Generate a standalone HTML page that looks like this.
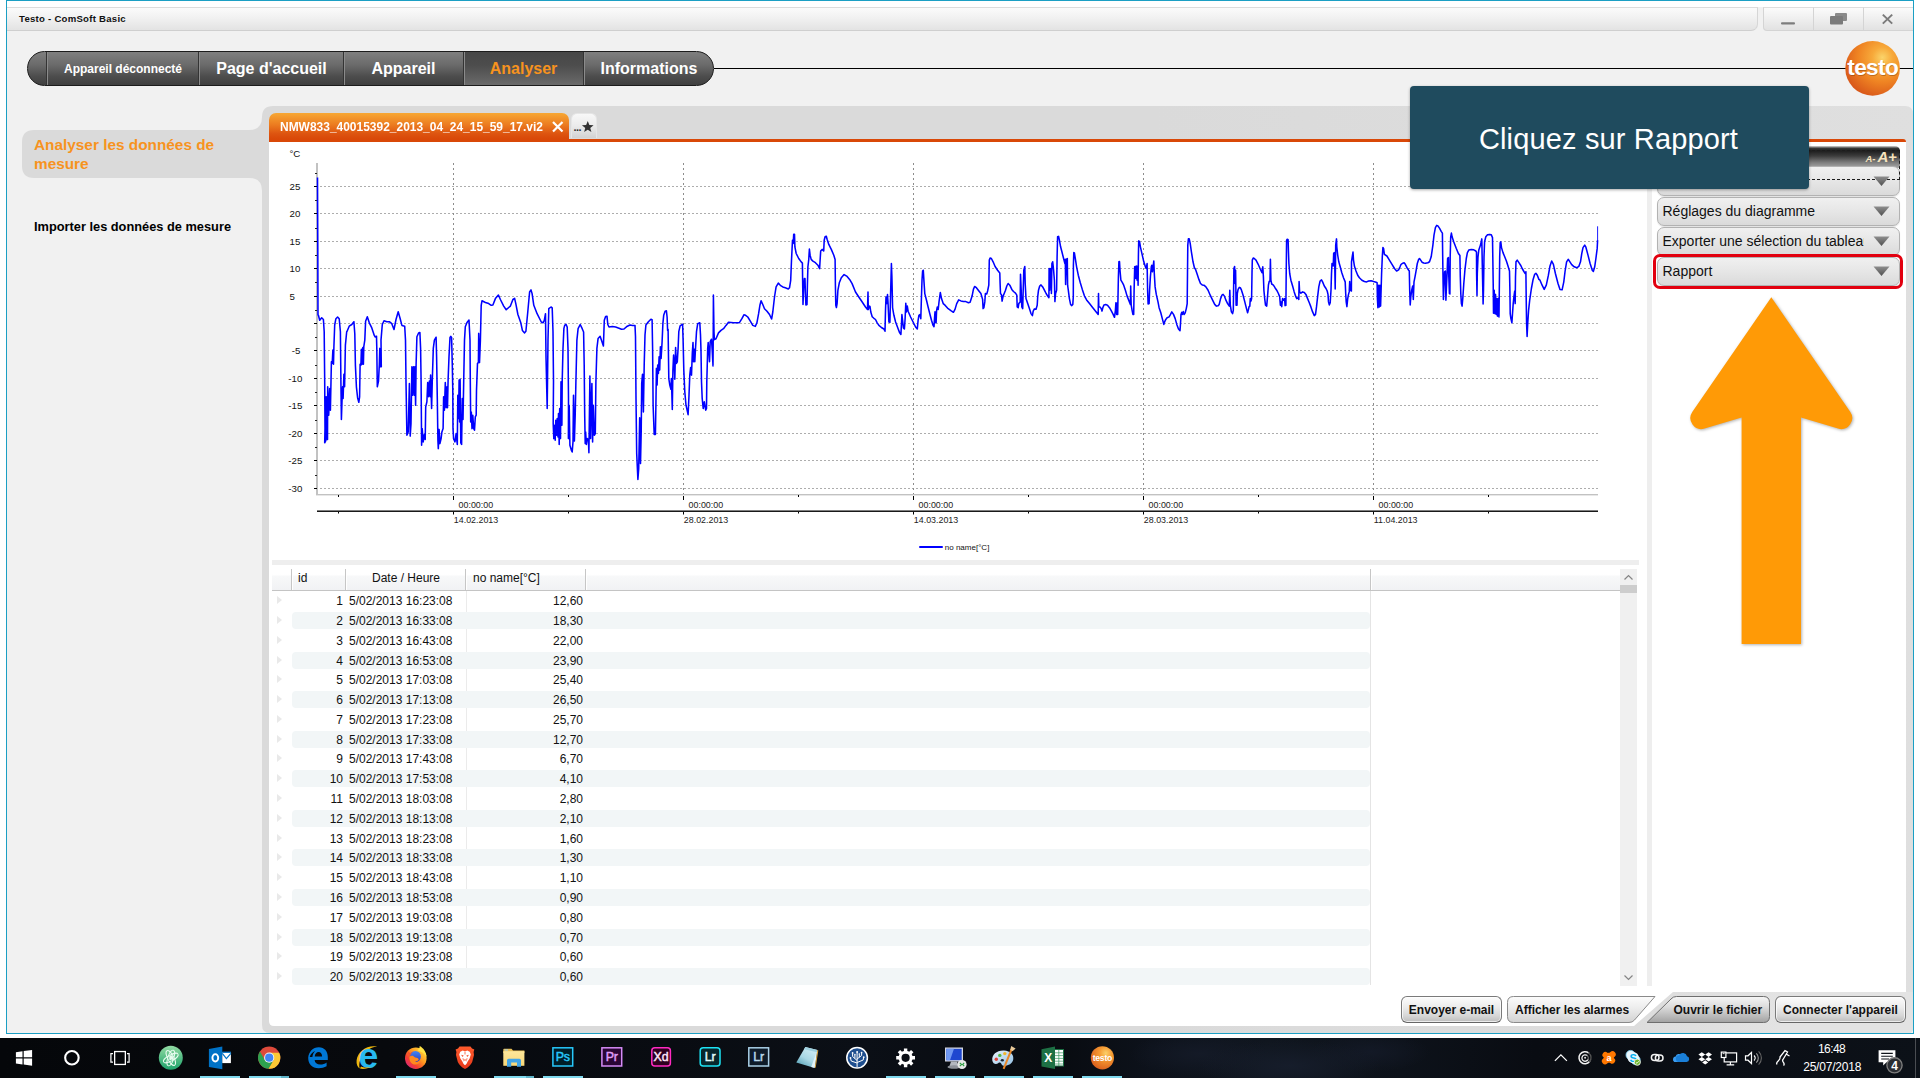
<!DOCTYPE html>
<html lang="fr"><head><meta charset="utf-8"><title>Testo - ComSoft Basic</title>
<style>
*{box-sizing:border-box;margin:0;padding:0}
html,body{width:1920px;height:1078px;overflow:hidden;background:#fff}
body{font-family:"Liberation Sans",sans-serif;position:relative;color:#000}
.a{position:absolute}
.nw{white-space:nowrap}
/* window */
#win{left:6px;top:0;width:1908px;height:1034px;border:1px solid #1b9fc4;background:#f1f1f1}
#wtop{left:7px;top:1px;width:1906px;height:6px;background:#fff}
#tbar{left:7px;top:7px;width:1751px;height:24px;background:linear-gradient(#fbfbfb,#f1f1f1 45%,#e3e3e3);border-bottom:1px solid #cfcfcf;border-right:1px solid #d6d6d6;border-top:1px solid #dcdcdc;border-bottom-right-radius:7px}
#ttl{left:19px;top:12px;font-size:9.6px;font-weight:bold;line-height:13px;letter-spacing:.25px;color:#111}
.wb{top:7px;height:24px;background:linear-gradient(#fbfbfb,#f0f0f0 45%,#e2e2e2);border:1px solid #d4d4d4;border-top-color:#dedede}
/* nav */
#nav{left:27px;top:51px;width:687px;height:35px;border-radius:18px;border:1px solid #1c1c1c;background:linear-gradient(#7f7f7f,#6a6a6a 40%,#4c4c4c 75%,#404040);overflow:hidden}
#nav .sec{position:absolute;top:0;height:33px;border-left:1px solid #343434;box-shadow:inset 1px 0 0 #8b8b8b;color:#fff;font-weight:bold;text-align:center;line-height:34.2px;white-space:nowrap}
#hline{left:714px;top:67.9px;width:1199px;height:1.3px;background:#000}
</style></head><body>

<div class="a" id="win"></div>
<div class="a" id="wtop"></div>
<div class="a" id="tbar"></div>
<div class="a nw" id="ttl">Testo - ComSoft Basic</div>
<div class="a wb" style="left:1763px;width:51px;border-bottom-left-radius:4px"></div>
<div class="a wb" style="left:1813px;width:51px"></div>
<div class="a wb" style="left:1863px;width:50px;border-right:none"></div>
<svg class="a" style="left:1763px;top:7px" width="150" height="24" viewBox="0 0 150 24">
 <rect x="18" y="15.2" width="14" height="2.2" rx="1" fill="#7d7d7d"/>
 <rect x="72" y="6" width="12" height="8" rx="1" fill="#8a8a8a"/>
 <rect x="67" y="9" width="13" height="8.5" rx="1" fill="#7b7b7b"/>
 <path d="M119.8 7.6 L129.2 16.6 M129.2 7.6 L119.8 16.6" stroke="#7b7b7b" stroke-width="2" fill="none"/>
</svg>

<div class="a" id="hline"></div>
<div class="a" id="nav">
 <div class="sec" style="left:18px;width:153px;font-size:12px;letter-spacing:0">Appareil déconnecté</div>
 <div class="sec" style="left:170px;width:146px;font-size:16px">Page d'accueil</div>
 <div class="sec" style="left:315px;width:120px;font-size:16px">Appareil</div>
 <div class="sec" style="left:435px;width:120px;font-size:16px;color:#f7931e;background:linear-gradient(#474747,#4d4d4d 40%,#606060 80%,#6b6b6b)">Analyser</div>
 <div class="sec" style="left:555px;width:131px;font-size:16px">Informations</div>
</div>
<!-- testo logo -->
<svg class="a" style="left:1840px;top:36px" width="66" height="66" viewBox="0 0 66 66">
 <defs><radialGradient id="tg" cx="0.68" cy="0.3" r="0.75">
  <stop offset="0" stop-color="#fbd46a"/><stop offset="0.25" stop-color="#f7a93a"/><stop offset="0.6" stop-color="#ef8423"/><stop offset="1" stop-color="#d9591a"/></radialGradient></defs>
 <circle cx="32.6" cy="32.4" r="27.3" fill="url(#tg)"/>
 <text x="33.2" y="39.8" text-anchor="middle" font-family="Liberation Sans, sans-serif" font-weight="bold" font-size="22.6" fill="#7a3a10" opacity=".45" letter-spacing="-.6">testo</text>
 <text x="32.7" y="38.9" text-anchor="middle" font-family="Liberation Sans, sans-serif" font-weight="bold" font-size="22.6" fill="#fff" letter-spacing="-.6">testo</text>
</svg>

<!-- gray frame + selected sidebar item -->
<svg class="a" style="left:0;top:100px" width="1920" height="935" viewBox="0 100 1920 935">
 <defs><linearGradient id="frg" gradientUnits="userSpaceOnUse" x1="0" y1="0" x2="1920" y2="0"><stop offset=".6" stop-color="#dadada"/><stop offset="1" stop-color="#dfdfdf"/></linearGradient><linearGradient id="frg2" gradientUnits="userSpaceOnUse" x1="1626" y1="0" x2="1780" y2="0"><stop offset="0" stop-color="#dcdcdc"/><stop offset="1" stop-color="#e3e3e3"/></linearGradient></defs>
 <path fill="url(#frg)" d="M262 117 Q262 106 273 106 H1905 Q1913 106 1913 114 V1028 Q1913 1033 1908 1033 H270 Q262 1033 262 1025 V191 Q262 178 249 178 H34 Q22 178 22 166 V142 Q22 130 34 130 H249 Q262 130 262 117 Z"/>
 <path fill="url(#frg2)" d="M1673 992 H1913 V1028 Q1913 1033 1908 1033 H1626 Z"/>
 <path fill="#fff" d="M269 141 H1906 V992 H1673 L1634 1026 H274 Q269 1026 269 1021 Z"/>
</svg>
<div class="a" style="left:34px;top:134.5px;width:220px;font-size:15.37px;line-height:19.5px;font-weight:bold;color:#f7931e">Analyser les données de mesure</div>
<div class="a nw" style="left:34px;top:218px;font-size:12.8px;line-height:18px;font-weight:bold;color:#000">Importer les données de mesure</div>
<!-- tabs -->
<div class="a" style="left:269px;top:139px;width:1637px;height:3px;background:#d94808;border-top-right-radius:4px"></div>
<div class="a" style="left:269px;top:113px;width:300px;height:26px;border-radius:7px 7px 0 0;background:linear-gradient(#f7a733,#ec7c20 45%,#dd5410 80%,#d94808)"></div>
<div class="a nw" style="left:280px;top:118.5px;font-size:13px;line-height:16px;font-weight:bold;color:#fff;transform-origin:0 50%;transform:scaleX(.921)" id="tabtxt">NMW833_40015392_2013_04_24_15_59_17.vi2</div>
<svg class="a" style="left:550px;top:119px" width="16" height="16" viewBox="0 0 16 16"><path d="M3 3 L12.5 12.5 M12.5 3 L3 12.5" stroke="#fff" stroke-width="2.2" fill="none"/></svg>
<div class="a" style="left:571px;top:113px;width:26px;height:25px;border-radius:6px 6px 0 0;background:linear-gradient(#f8f8f8,#ebebeb 50%,#d2d2d2);border:1px solid #e6e6e6;border-bottom:none"></div>
<div class="a nw" style="left:573.5px;top:119px;font-size:11px;line-height:16px;font-weight:bold;color:#333;letter-spacing:-.6px">...</div>
<svg class="a" style="left:581px;top:119.5px" width="13.5" height="13.5" viewBox="0 0 16 16"><path fill="#333" d="M8 1.2 L9.9 5.9 L14.9 6.2 L11 9.4 L12.3 14.3 L8 11.6 L3.7 14.3 L5 9.4 L1.1 6.2 L6.1 5.9 Z"/></svg>
<!-- splitters -->
<div class="a" style="left:1647px;top:142px;width:5px;height:844px;background:#eee"></div>
<div class="a" style="left:272px;top:560px;width:1367px;height:5px;background:#eee"></div>
<svg class="a" style="left:269px;top:142px" width="1378" height="418" viewBox="269 142 1378 418" font-family="Liberation Sans, sans-serif">
<line x1="320" x2="1598" y1="186.5" y2="186.5" stroke="#adadad" stroke-width="1" stroke-dasharray="2 2"/>
<line x1="320" x2="1598" y1="213.5" y2="213.5" stroke="#adadad" stroke-width="1" stroke-dasharray="2 2"/>
<line x1="320" x2="1598" y1="241.5" y2="241.5" stroke="#adadad" stroke-width="1" stroke-dasharray="2 2"/>
<line x1="320" x2="1598" y1="268.5" y2="268.5" stroke="#adadad" stroke-width="1" stroke-dasharray="2 2"/>
<line x1="320" x2="1598" y1="296.5" y2="296.5" stroke="#adadad" stroke-width="1" stroke-dasharray="2 2"/>
<line x1="320" x2="1598" y1="323.5" y2="323.5" stroke="#b4b4b4" stroke-width="1" stroke-dasharray="2 2"/>
<line x1="320" x2="1598" y1="350.5" y2="350.5" stroke="#adadad" stroke-width="1" stroke-dasharray="2 2"/>
<line x1="320" x2="1598" y1="378.5" y2="378.5" stroke="#adadad" stroke-width="1" stroke-dasharray="2 2"/>
<line x1="320" x2="1598" y1="405.5" y2="405.5" stroke="#adadad" stroke-width="1" stroke-dasharray="2 2"/>
<line x1="320" x2="1598" y1="433.5" y2="433.5" stroke="#adadad" stroke-width="1" stroke-dasharray="2 2"/>
<line x1="320" x2="1598" y1="460.5" y2="460.5" stroke="#adadad" stroke-width="1" stroke-dasharray="2 2"/>
<line x1="320" x2="1598" y1="488.5" y2="488.5" stroke="#adadad" stroke-width="1" stroke-dasharray="2 2"/>
<line x1="453.5" x2="453.5" y1="163" y2="494" stroke="#8c8c8c" stroke-width="1" stroke-dasharray="2 3"/>
<line x1="683.5" x2="683.5" y1="163" y2="494" stroke="#8c8c8c" stroke-width="1" stroke-dasharray="2 3"/>
<line x1="913.5" x2="913.5" y1="163" y2="494" stroke="#8c8c8c" stroke-width="1" stroke-dasharray="2 3"/>
<line x1="1143.5" x2="1143.5" y1="163" y2="494" stroke="#8c8c8c" stroke-width="1" stroke-dasharray="2 3"/>
<line x1="1373.5" x2="1373.5" y1="163" y2="494" stroke="#8c8c8c" stroke-width="1" stroke-dasharray="2 3"/>
<rect x="316" y="163" width="2" height="332" fill="#c2c2c2"/>
<rect x="316" y="494" width="1282" height="1.4" fill="#c2c2c2"/>
<rect x="317" y="510.5" width="1281" height="1.4" fill="#000"/>
<rect x="314" y="186" width="3" height="1" fill="#000"/>
<rect x="314" y="213" width="3" height="1" fill="#000"/>
<rect x="314" y="241" width="3" height="1" fill="#000"/>
<rect x="314" y="268" width="3" height="1" fill="#000"/>
<rect x="314" y="296" width="3" height="1" fill="#000"/>
<rect x="314" y="323" width="3" height="1" fill="#000"/>
<rect x="314" y="350" width="3" height="1" fill="#000"/>
<rect x="314" y="378" width="3" height="1" fill="#000"/>
<rect x="314" y="405" width="3" height="1" fill="#000"/>
<rect x="314" y="433" width="3" height="1" fill="#000"/>
<rect x="314" y="460" width="3" height="1" fill="#000"/>
<rect x="314" y="488" width="3" height="1" fill="#000"/>
<rect x="315" y="173.0" width="2" height="1" fill="#222"/>
<rect x="315" y="200.0" width="2" height="1" fill="#222"/>
<rect x="315" y="228.0" width="2" height="1" fill="#222"/>
<rect x="315" y="255.0" width="2" height="1" fill="#222"/>
<rect x="315" y="282.0" width="2" height="1" fill="#222"/>
<rect x="315" y="310.0" width="2" height="1" fill="#222"/>
<rect x="315" y="337.0" width="2" height="1" fill="#222"/>
<rect x="315" y="365.0" width="2" height="1" fill="#222"/>
<rect x="315" y="392.0" width="2" height="1" fill="#222"/>
<rect x="315" y="420.0" width="2" height="1" fill="#222"/>
<rect x="315" y="447.0" width="2" height="1" fill="#222"/>
<rect x="315" y="475.0" width="2" height="1" fill="#222"/>
<rect x="453" y="496" width="1" height="4" fill="#000"/>
<rect x="453" y="512" width="1" height="2.5" fill="#000"/>
<rect x="683" y="496" width="1" height="4" fill="#000"/>
<rect x="683" y="512" width="1" height="2.5" fill="#000"/>
<rect x="913" y="496" width="1" height="4" fill="#000"/>
<rect x="913" y="512" width="1" height="2.5" fill="#000"/>
<rect x="1143" y="496" width="1" height="4" fill="#000"/>
<rect x="1143" y="512" width="1" height="2.5" fill="#000"/>
<rect x="1373" y="496" width="1" height="4" fill="#000"/>
<rect x="1373" y="512" width="1" height="2.5" fill="#000"/>
<rect x="338" y="495" width="1" height="2" fill="#000"/>
<rect x="338" y="512" width="1" height="1.5" fill="#000"/>
<rect x="568" y="495" width="1" height="2" fill="#000"/>
<rect x="568" y="512" width="1" height="1.5" fill="#000"/>
<rect x="798" y="495" width="1" height="2" fill="#000"/>
<rect x="798" y="512" width="1" height="1.5" fill="#000"/>
<rect x="1028" y="495" width="1" height="2" fill="#000"/>
<rect x="1028" y="512" width="1" height="1.5" fill="#000"/>
<rect x="1258" y="495" width="1" height="2" fill="#000"/>
<rect x="1258" y="512" width="1" height="1.5" fill="#000"/>
<rect x="1488" y="495" width="1" height="2" fill="#000"/>
<rect x="1488" y="512" width="1" height="1.5" fill="#000"/>
<text x="289.5" y="157" font-size="9.7" fill="#111">°C</text>
<text x="300.3" y="190.0" font-size="9.7" fill="#111" text-anchor="end">25</text>
<text x="300.3" y="217.0" font-size="9.7" fill="#111" text-anchor="end">20</text>
<text x="300.3" y="245.0" font-size="9.7" fill="#111" text-anchor="end">15</text>
<text x="300.3" y="272.0" font-size="9.7" fill="#111" text-anchor="end">10</text>
<text x="289.5" y="300.0" font-size="9.7" fill="#111">5</text>
<text x="300.3" y="354.0" font-size="9.7" fill="#111" text-anchor="end">-5</text>
<text x="302.3" y="382.0" font-size="9.7" fill="#111" text-anchor="end">-10</text>
<text x="302.3" y="409.0" font-size="9.7" fill="#111" text-anchor="end">-15</text>
<text x="302.3" y="437.0" font-size="9.7" fill="#111" text-anchor="end">-20</text>
<text x="302.3" y="464.0" font-size="9.7" fill="#111" text-anchor="end">-25</text>
<text x="302.3" y="492.0" font-size="9.7" fill="#111" text-anchor="end">-30</text>
<text x="458.6" y="507.6" font-size="8.9" fill="#222">00:00:00</text>
<text x="453.8" y="523" font-size="8.9" fill="#222">14.02.2013</text>
<text x="688.6" y="507.6" font-size="8.9" fill="#222">00:00:00</text>
<text x="683.8" y="523" font-size="8.9" fill="#222">28.02.2013</text>
<text x="918.6" y="507.6" font-size="8.9" fill="#222">00:00:00</text>
<text x="913.8" y="523" font-size="8.9" fill="#222">14.03.2013</text>
<text x="1148.6" y="507.6" font-size="8.9" fill="#222">00:00:00</text>
<text x="1143.8" y="523" font-size="8.9" fill="#222">28.03.2013</text>
<text x="1378.6" y="507.6" font-size="8.9" fill="#222">00:00:00</text>
<text x="1373.8" y="523" font-size="8.9" fill="#222">11.04.2013</text>
<line x1="920" x2="942" y1="547" y2="547" stroke="#0000ff" stroke-width="2" stroke-linecap="round"/>
<text x="944.8" y="550" font-size="8" fill="#111">no name[°C]</text>
<polyline fill="none" stroke="#0000ff" stroke-width="1.55" stroke-linejoin="round" points="317.5,177.5 317.8,248.2 318.0,315.0 318.4,315.3 319.7,320.3 321.7,317.8 323.4,319.5 324.2,331.7 324.7,381.8 325.0,428.6 324.7,442.8 325.9,440.3 326.2,396.8 326.7,438.6 327.5,439.4 327.7,386.8 328.7,415.2 329.7,388.5 330.4,410.2 331.4,361.8 332.2,363.4 332.9,350.1 333.5,364.3 333.9,346.7 334.7,325.0 335.9,318.7 337.6,317.0 339.2,318.7 340.4,331.7 340.9,381.8 341.4,419.4 342.1,398.5 342.6,386.8 343.1,398.5 343.9,374.3 344.6,386.8 345.4,345.1 346.7,331.7 347.1,331.2 349.2,326.2 351.8,324.5 353.9,321.7 354.8,333.7 355.4,365.1 356.4,386.8 357.6,397.7 358.8,402.3 359.6,396.8 360.1,364.3 360.9,365.1 361.4,349.2 362.1,364.3 362.8,347.6 363.4,364.3 363.8,346.7 364.8,340.1 365.6,321.2 367.3,316.7 369.3,322.8 371.8,327.9 374.3,335.4 375.1,337.0 376.5,336.2 376.8,348.4 377.3,386.8 378.5,381.0 379.3,365.1 379.8,348.4 380.5,366.8 381.3,366.8 381.0,340.1 382.3,324.5 384.0,320.7 386.8,321.7 389.3,321.7 391.8,323.7 394.0,329.5 396.0,319.5 398.2,311.7 400.2,318.7 401.9,325.4 404.7,326.2 405.5,340.1 406.0,381.8 406.9,435.3 408.2,431.9 409.4,383.5 410.2,436.1 411.0,423.6 411.9,366.8 412.7,395.2 413.5,366.8 414.4,395.2 414.9,366.8 415.6,405.2 416.1,365.1 416.9,336.7 418.6,333.0 419.9,332.5 420.6,348.4 421.1,381.8 421.6,445.3 422.2,428.6 423.2,441.9 424.4,434.4 425.2,439.4 425.7,406.9 426.9,401.8 427.7,382.6 428.6,396.8 429.4,381.0 430.3,396.8 430.6,375.1 431.6,408.5 432.3,380.1 433.3,348.4 434.4,340.1 436.1,337.2 436.6,356.8 437.3,398.5 437.9,440.3 438.3,448.6 439.1,429.4 439.9,443.6 441.1,438.6 441.9,431.9 443.1,428.6 443.6,396.8 444.4,410.2 445.3,382.6 446.1,407.7 447.0,386.8 447.5,407.7 448.1,380.1 449.0,356.8 450.0,337.5 450.8,336.4 451.6,337.5 452.3,365.1 452.8,391.8 453.0,428.6 453.6,438.6 455.0,441.9 456.1,433.6 457.3,444.4 457.8,395.2 458.6,418.5 459.1,380.1 459.6,421.9 460.1,379.3 460.8,442.8 461.6,444.4 462.3,398.5 463.0,419.4 463.7,381.8 464.5,340.1 465.3,326.7 467.0,322.5 469.0,320.0 470.0,340.1 470.3,381.8 470.7,421.9 471.3,411.9 472.0,428.6 472.8,415.2 473.7,428.6 474.5,430.2 475.3,416.9 476.2,415.2 476.5,390.2 477.5,363.4 478.4,362.6 478.7,333.4 479.5,362.6 480.4,340.1 481.2,305.3 482.0,300.8 485.4,302.5 488.7,303.6 491.2,305.3 492.9,305.0 495.4,298.6 498.4,295.0 500.4,299.5 503.7,306.1 506.2,309.8 508.7,307.5 510.4,306.1 512.9,299.5 514.6,298.3 515.8,303.6 517.9,314.5 520.8,322.8 522.4,330.4 524.6,332.9 525.9,331.2 527.6,313.7 529.6,292.0 531.0,289.9 532.1,293.6 533.8,305.3 537.1,313.7 541.3,322.0 543.0,322.8 544.3,320.3 545.5,313.7 546.0,356.8 547.2,408.5 548.0,340.1 548.8,308.7 551.0,307.0 552.2,307.8 553.0,331.7 553.5,381.8 553.2,423.6 553.8,438.6 554.7,425.2 555.2,440.3 555.8,420.2 556.5,435.3 557.2,418.5 558.0,436.9 558.5,413.5 559.2,444.4 559.7,408.5 560.5,438.6 561.0,381.8 561.9,425.2 562.2,381.8 563.0,348.4 563.9,328.4 564.7,325.4 566.0,324.2 567.2,327.0 568.0,348.4 568.5,398.5 568.4,438.6 569.2,405.2 569.9,445.3 571.4,450.3 572.2,452.0 573.0,441.9 573.5,395.2 574.4,441.1 575.2,415.2 575.9,381.8 576.9,340.1 578.1,328.7 580.2,324.5 582.2,328.7 583.6,332.0 584.2,365.1 584.7,415.2 585.2,443.6 585.6,431.9 586.4,444.4 587.2,438.6 588.4,439.4 588.9,452.8 589.4,415.2 589.9,376.0 590.6,438.6 591.1,411.9 591.9,383.5 592.6,441.9 593.3,405.2 594.3,435.3 595.3,433.6 595.9,381.8 596.9,348.4 598.1,338.4 600.1,336.2 601.4,340.1 603.4,345.9 603.9,331.7 604.3,320.3 605.6,316.5 607.0,316.2 607.8,324.5 609.0,327.0 612.3,326.5 615.6,327.0 619.0,328.2 621.5,329.2 624.0,329.0 627.3,326.2 630.0,325.0 632.5,325.4 635.0,325.4 635.5,336.7 636.0,398.5 636.7,453.6 637.9,479.5 638.7,468.7 639.7,417.7 640.5,463.6 641.2,431.9 641.7,383.5 642.5,374.3 643.4,411.9 644.2,365.1 645.0,335.0 645.9,325.0 648.4,321.7 650.9,319.2 652.1,319.7 652.6,348.4 653.1,405.2 654.2,434.4 655.4,434.4 655.9,405.2 656.4,368.4 657.1,385.1 657.7,365.1 658.4,373.5 659.1,356.8 659.7,370.1 660.4,346.7 661.1,358.4 662.1,341.7 662.9,323.4 663.7,315.3 665.1,311.2 666.4,310.8 667.1,317.0 667.6,330.4 668.1,329.5 668.8,378.5 669.8,385.1 670.9,389.3 671.4,378.5 672.3,409.4 672.9,370.1 673.6,355.1 674.3,365.1 674.8,379.3 675.6,347.6 676.4,363.4 677.3,361.8 678.1,348.4 678.8,331.7 680.1,325.9 682.6,324.2 683.1,340.1 683.8,370.1 684.8,391.8 686.0,405.2 688.1,414.7 689.0,395.2 689.8,375.1 690.6,367.6 691.5,375.1 692.3,353.4 693.0,342.6 693.5,361.8 694.3,349.2 694.8,361.8 695.5,348.4 696.5,331.7 697.7,323.7 699.8,322.8 700.5,335.0 701.0,350.9 701.5,381.8 702.2,398.5 703.2,408.5 704.3,401.8 705.7,410.2 706.5,408.5 706.8,381.8 707.7,348.4 708.2,342.6 708.8,350.1 709.5,361.8 710.2,341.7 711.5,339.2 712.2,350.1 713.0,365.9 713.2,340.1 713.4,295.0 714.0,331.7 714.4,339.6 716.0,338.7 718.5,332.9 721.0,330.4 723.5,328.7 726.0,325.4 728.5,322.3 733.6,322.8 739.4,322.7 741.9,318.7 743.9,314.8 745.6,315.3 747.8,317.0 750.3,321.2 752.8,325.4 755.3,326.4 756.9,322.8 758.6,313.7 759.9,305.3 761.1,300.8 762.8,304.5 764.5,308.7 767.0,311.2 769.5,314.5 771.6,319.0 772.8,312.0 774.5,297.0 776.1,286.9 778.3,283.1 780.3,285.3 782.8,286.9 785.3,287.8 788.3,288.9 789.5,287.8 790.7,280.3 791.5,260.2 792.5,240.2 793.2,243.5 793.7,234.3 794.5,234.3 794.9,246.9 796.2,253.5 798.7,258.5 801.2,261.9 802.4,263.1 802.7,285.3 803.0,304.5 803.7,286.9 804.4,278.6 805.0,278.6 805.4,293.6 805.9,305.0 807.0,304.5 807.4,285.3 807.9,266.9 808.7,260.2 809.4,249.0 810.1,255.2 811.2,259.4 812.9,261.1 815.4,262.7 817.9,265.2 819.6,268.6 820.1,260.2 820.7,251.0 822.1,249.4 822.9,250.2 823.7,251.0 824.2,240.2 825.1,236.8 826.3,236.2 827.1,239.3 828.8,244.4 831.3,249.4 833.8,255.2 835.1,259.4 835.4,285.3 835.8,305.3 836.4,307.5 837.1,303.6 837.9,290.3 839.3,282.8 841.3,277.8 844.1,274.6 847.1,276.4 849.6,279.4 852.1,283.6 855.5,292.0 858.8,297.0 862.2,302.0 865.5,307.0 867.5,309.5 868.0,292.0 868.3,309.5 869.2,306.1 870.0,306.5 870.8,312.0 872.2,316.7 873.9,318.3 875.5,319.5 877.2,322.8 878.9,325.4 881.4,327.5 883.9,329.0 885.0,331.2 885.5,310.3 886.0,297.0 886.7,303.6 887.5,294.5 888.0,302.0 888.9,322.0 889.9,322.3 890.6,293.6 891.4,263.6 891.9,276.9 892.6,307.8 893.9,315.3 895.6,322.0 898.1,328.7 899.7,332.9 900.9,334.5 901.4,325.4 901.9,314.5 902.6,320.3 903.4,327.9 904.4,329.0 905.1,318.7 905.8,303.3 906.4,312.0 907.3,306.1 908.1,311.2 910.6,317.0 913.1,322.0 915.6,327.0 917.3,329.0 918.1,320.3 918.9,315.3 919.9,314.5 920.8,318.7 921.3,302.0 922.0,280.3 922.6,271.1 923.3,270.2 924.0,281.9 924.8,293.6 926.5,300.3 928.1,307.0 929.8,313.7 931.5,320.3 933.1,325.4 934.0,326.7 934.5,318.7 935.0,311.7 935.6,322.8 936.1,322.8 936.6,310.3 937.3,307.0 938.2,309.5 939.0,302.0 940.3,292.5 941.5,298.6 943.2,303.6 945.0,305.2 947.5,308.1 950.9,310.6 953.4,312.3 955.0,309.4 956.7,303.6 958.7,299.9 960.9,300.9 963.4,301.4 965.9,301.6 968.4,302.7 970.1,302.2 972.1,296.1 973.4,289.4 974.6,286.5 976.4,287.7 978.7,290.7 980.9,293.5 982.6,299.4 983.1,308.6 983.9,307.7 984.8,301.9 985.4,293.5 986.8,293.9 987.6,291.0 988.8,285.2 989.3,260.1 990.1,258.0 991.4,258.5 993.1,261.8 995.1,266.5 997.6,270.2 999.8,273.0 1000.1,283.5 1000.5,293.5 1001.5,294.9 1002.1,301.1 1003.1,296.1 1004.3,293.2 1005.5,290.2 1006.8,286.0 1008.1,283.5 1009.8,285.2 1011.8,289.4 1013.5,291.5 1015.5,293.2 1016.8,295.2 1017.2,306.9 1018.2,307.7 1018.8,303.6 1020.2,301.9 1020.5,274.3 1021.2,290.2 1021.8,306.9 1022.7,308.6 1023.2,290.2 1023.8,270.2 1024.8,266.5 1025.2,283.5 1026.0,298.6 1027.7,303.6 1029.4,308.6 1031.0,313.6 1032.4,315.6 1033.2,311.1 1034.4,308.9 1036.0,309.2 1037.2,305.2 1037.7,296.9 1038.5,290.2 1039.7,286.0 1041.0,284.9 1042.7,286.9 1044.4,290.2 1046.1,293.5 1047.7,296.1 1048.9,297.7 1049.1,268.5 1049.7,290.2 1050.2,268.5 1051.1,269.3 1051.4,293.5 1051.9,263.5 1052.7,261.8 1053.6,270.2 1054.4,280.2 1054.9,301.6 1055.6,293.5 1056.6,290.2 1057.1,256.8 1057.6,236.8 1058.6,236.4 1059.4,240.1 1060.6,246.8 1061.9,251.8 1063.6,258.5 1064.9,263.5 1065.3,259.3 1065.6,284.4 1066.4,259.3 1067.3,258.5 1067.6,285.2 1068.3,290.2 1069.4,298.6 1070.6,304.4 1071.6,305.6 1072.8,304.4 1073.3,296.9 1073.4,265.2 1073.8,252.6 1074.4,253.0 1075.3,258.5 1076.6,266.8 1078.3,275.2 1080.3,282.7 1082.3,289.4 1084.5,296.1 1086.6,299.9 1089.5,303.6 1092.8,307.7 1096.2,311.9 1098.2,314.4 1098.5,293.5 1098.8,306.9 1100.0,306.9 1101.2,308.6 1102.0,311.1 1102.8,307.7 1104.0,304.9 1105.7,304.6 1107.5,305.2 1109.5,307.7 1111.2,310.6 1112.9,313.9 1114.5,317.3 1115.4,310.3 1115.9,302.7 1116.7,314.4 1117.4,302.7 1117.7,314.4 1118.0,296.9 1118.4,276.8 1118.9,261.8 1119.5,261.5 1120.0,270.2 1120.9,280.2 1122.4,282.7 1123.7,285.2 1125.4,290.2 1127.1,296.1 1129.1,301.1 1130.4,304.4 1130.7,286.0 1131.2,305.2 1132.1,310.3 1132.9,314.4 1133.7,314.4 1134.1,290.2 1134.7,266.8 1135.4,266.5 1135.9,278.5 1136.4,266.0 1137.1,280.2 1137.7,266.0 1138.1,285.2 1138.4,256.8 1138.7,240.9 1139.6,241.8 1140.4,246.8 1142.1,254.3 1143.8,261.8 1145.4,266.8 1146.3,268.5 1147.1,263.5 1147.6,290.2 1148.1,303.9 1149.1,303.6 1149.6,290.2 1150.4,276.8 1151.3,266.8 1151.8,265.2 1152.4,271.8 1153.1,266.8 1153.8,261.0 1154.3,273.5 1155.1,286.9 1156.3,294.4 1158.0,301.9 1159.1,307.7 1160.8,312.8 1162.5,319.4 1163.8,324.4 1164.6,321.9 1165.8,319.4 1167.1,317.8 1169.1,316.9 1170.5,314.4 1171.8,311.9 1173.5,314.4 1175.2,318.6 1176.8,324.4 1178.5,329.0 1180.0,330.6 1180.5,323.6 1181.0,314.4 1181.7,312.4 1182.5,314.4 1183.2,311.6 1184.2,314.4 1185.2,312.8 1186.3,308.6 1187.2,303.6 1187.5,273.5 1187.8,245.1 1188.4,238.8 1189.2,238.8 1190.2,243.4 1191.4,251.8 1193.0,261.8 1194.4,267.7 1195.5,269.3 1197.2,274.3 1198.9,279.4 1200.5,283.5 1202.2,284.9 1203.9,285.2 1205.9,286.9 1208.1,290.2 1210.2,295.2 1212.6,300.2 1214.7,304.4 1216.4,306.1 1218.1,305.7 1219.2,304.4 1220.6,298.6 1221.9,295.2 1223.1,294.4 1224.4,296.1 1225.9,300.2 1227.6,303.6 1229.3,306.1 1229.8,290.2 1230.3,305.2 1231.4,311.9 1232.6,313.6 1233.3,310.3 1233.6,290.2 1233.9,268.5 1234.6,266.5 1235.1,283.5 1235.6,270.2 1236.1,305.2 1237.0,305.2 1237.3,293.5 1238.1,289.4 1239.3,287.4 1240.3,287.7 1241.5,290.2 1243.1,295.2 1244.8,301.9 1246.5,308.6 1247.6,312.8 1248.5,309.4 1249.0,306.9 1249.8,306.1 1250.3,298.6 1251.0,301.1 1251.6,298.6 1252.0,273.5 1252.3,260.1 1253.2,258.0 1254.3,258.5 1256.0,260.1 1258.2,264.3 1260.0,268.5 1262.0,272.7 1262.8,266.8 1263.4,276.8 1263.9,290.2 1264.7,298.6 1265.5,305.2 1266.7,306.1 1267.5,296.9 1268.4,285.2 1269.2,281.5 1270.0,281.0 1270.4,259.3 1270.9,280.2 1271.7,284.0 1273.4,285.2 1275.0,287.7 1276.7,290.2 1278.4,293.5 1279.7,296.9 1280.4,305.2 1281.1,301.9 1281.7,306.6 1282.6,298.6 1283.7,300.2 1284.6,298.6 1285.1,305.6 1285.9,305.2 1286.2,273.5 1286.6,240.1 1287.2,239.3 1288.1,239.8 1288.4,250.1 1288.9,263.5 1289.7,273.5 1290.9,280.2 1292.6,286.0 1294.2,291.9 1295.9,296.9 1296.8,298.6 1298.1,297.7 1298.8,299.4 1299.1,281.5 1299.6,291.9 1300.9,293.2 1302.6,291.9 1304.3,292.4 1305.9,294.4 1307.6,298.6 1309.3,302.7 1310.9,306.9 1312.6,311.9 1314.3,315.6 1315.5,314.4 1316.5,306.9 1317.6,296.9 1318.8,286.9 1320.1,281.0 1321.5,279.9 1322.6,281.9 1324.3,286.0 1326.0,288.5 1327.2,291.0 1328.0,294.4 1328.5,301.9 1329.3,304.9 1330.2,302.7 1331.0,290.2 1331.5,273.5 1332.0,263.5 1332.8,263.5 1333.2,266.0 1333.7,253.1 1334.5,252.6 1335.2,289.0 1335.7,245.1 1336.5,238.9 1336.8,246.8 1337.7,255.1 1338.8,261.8 1340.2,266.8 1341.8,272.7 1343.5,277.7 1345.2,281.9 1345.7,293.5 1346.2,301.9 1346.9,306.6 1347.7,298.6 1348.5,294.4 1349.2,291.9 1349.7,281.5 1350.2,290.2 1351.4,291.0 1351.5,261.8 1352.2,256.8 1353.0,252.1 1353.5,260.1 1354.4,266.0 1356.0,271.0 1357.7,275.2 1359.4,277.7 1361.9,280.2 1364.4,281.5 1366.6,281.9 1368.6,281.0 1371.1,280.7 1373.6,281.5 1376.1,282.2 1377.1,282.7 1377.4,298.6 1377.9,307.7 1378.6,285.2 1379.3,306.9 1379.9,285.2 1380.6,306.1 1381.1,290.2 1381.6,273.5 1382.3,256.8 1382.9,247.6 1383.6,248.5 1384.4,254.3 1386.9,256.0 1389.4,260.1 1392.0,264.3 1394.5,268.5 1396.6,271.0 1398.6,269.8 1400.0,266.8 1401.1,264.3 1402.8,263.2 1404.1,262.7 1405.3,264.3 1407.0,267.7 1408.7,270.2 1409.3,271.0 1409.7,290.2 1410.2,304.9 1410.8,296.9 1411.7,290.2 1412.7,286.0 1413.3,299.4 1414.0,281.9 1415.0,276.8 1416.2,270.2 1417.3,263.5 1418.7,259.3 1419.5,258.5 1420.7,260.1 1422.0,262.2 1423.7,263.0 1425.4,263.2 1427.9,262.7 1429.5,261.8 1431.2,256.8 1432.9,245.1 1434.0,235.1 1435.4,227.6 1436.7,225.4 1437.9,225.9 1439.6,228.4 1441.2,231.4 1442.4,233.1 1442.7,256.8 1443.1,283.5 1443.4,299.4 1444.1,283.5 1444.6,271.8 1445.4,271.0 1445.9,300.2 1446.6,283.5 1447.1,273.5 1447.6,258.5 1448.4,257.6 1448.7,273.5 1449.4,293.5 1449.9,293.9 1450.2,256.8 1450.7,236.8 1451.4,233.1 1452.1,236.8 1453.7,241.8 1456.3,248.5 1458.4,253.5 1459.9,255.5 1460.3,276.8 1460.8,293.5 1461.4,303.6 1462.1,306.1 1462.9,296.9 1463.8,283.5 1464.9,270.2 1466.3,258.5 1467.4,252.6 1468.8,250.1 1471.3,249.5 1473.8,249.8 1475.8,251.0 1476.5,252.1 1476.6,273.5 1477.0,295.6 1477.3,273.5 1478.0,256.8 1478.8,250.1 1480.5,245.1 1481.8,238.9 1482.3,265.2 1482.8,290.2 1483.1,303.9 1483.5,290.2 1484.0,256.8 1484.6,241.8 1485.8,236.8 1487.5,234.8 1489.7,234.4 1491.3,234.8 1492.5,237.6 1492.8,256.8 1493.2,283.5 1493.5,313.3 1494.2,290.2 1494.8,313.6 1495.5,294.4 1496.2,314.4 1496.8,298.6 1497.5,316.1 1498.2,298.6 1499.0,316.9 1499.3,290.2 1499.7,256.8 1500.2,242.6 1500.8,241.8 1501.5,247.6 1503.0,252.6 1504.7,256.8 1506.4,261.0 1508.0,266.0 1509.5,271.0 1509.9,290.2 1510.2,313.6 1510.9,318.6 1511.9,322.8 1512.5,313.6 1513.2,303.6 1513.9,296.9 1514.7,291.0 1515.2,303.6 1515.5,276.8 1516.0,261.8 1517.2,260.1 1518.9,262.7 1520.6,265.2 1522.2,268.5 1523.9,271.5 1525.2,273.5 1525.9,271.8 1526.2,298.6 1526.6,323.6 1527.1,336.5 1527.7,323.6 1528.6,310.3 1529.7,300.2 1531.4,288.5 1533.1,279.4 1534.7,274.3 1535.9,273.2 1537.3,275.2 1538.9,279.4 1540.0,280.2 1542.1,285.2 1544.2,289.4 1546.3,285.2 1548.4,275.2 1550.0,266.0 1551.7,261.0 1553.4,264.3 1555.4,273.5 1558.0,283.5 1560.0,289.4 1562.1,289.8 1563.8,281.8 1565.1,271.0 1566.6,261.8 1568.2,259.3 1569.6,261.4 1571.7,264.7 1574.2,266.8 1576.7,267.8 1578.8,266.4 1580.5,261.8 1581.8,253.4 1583.0,247.6 1584.7,245.1 1585.9,247.2 1588.0,255.1 1590.1,263.5 1592.2,270.1 1593.4,271.4 1594.7,266.8 1595.9,258.5 1597.2,248.4 1597.6,240.1"/>
<line x1="1597.6" x2="1597.6" y1="240.5" y2="226.3" stroke="#0000ff" stroke-width=".9"/>
</svg><style>.th{position:absolute;top:569px;height:21px;line-height:18px;font-size:12px;color:#111;white-space:nowrap}
.hs{position:absolute;top:569px;width:2px;height:21px;background:linear-gradient(90deg,#c6c6c6 50%,#fff 50%)}
.tr{position:absolute;left:272px;width:1098px;height:17px;font-size:12px;line-height:17px;color:#111;white-space:nowrap}
.tr i{position:absolute;left:20px;top:0;width:1078px;height:17px;border-radius:4px;background:#f2f6f7}
.tr b{position:absolute;font-weight:normal;top:1px}
.tr u{position:absolute;left:5px;top:4px;width:0;height:0;border-left:5px solid #e9e9e9;border-top:4px solid transparent;border-bottom:4px solid transparent}
</style>
<div class="a" style="left:272px;top:569px;width:1348px;height:22px;background:linear-gradient(#fff 0,#fff 26%,#f7f8f9 36%,#f1f2f4 100%);border-bottom:1px solid #c4c4c4"></div>
<div class="hs" style="left:291px"></div>
<div class="hs" style="left:345px"></div>
<div class="hs" style="left:465px"></div>
<div class="hs" style="left:585px"></div>
<div class="hs" style="left:1370px"></div>
<div class="th" style="left:298px">id</div>
<div class="th" style="left:346px;width:120px;text-align:center">Date / Heure</div>
<div class="th" style="left:473px">no name[°C]</div>
<div class="a" style="left:466px;top:591px;width:1px;height:394px;background:#ebebeb"></div>
<div class="a" style="left:1370px;top:591px;width:1px;height:394px;background:#e4e4e4"></div>
<div class="tr" style="top:592.1px"><u></u><b style="right:1027px">1</b><b style="left:77px">5/02/2013 16:23:08</b><b style="right:787px">12,60</b></div>
<div class="tr" style="top:611.9px"><i></i><u></u><b style="right:1027px">2</b><b style="left:77px">5/02/2013 16:33:08</b><b style="right:787px">18,30</b></div>
<div class="tr" style="top:631.7px"><u></u><b style="right:1027px">3</b><b style="left:77px">5/02/2013 16:43:08</b><b style="right:787px">22,00</b></div>
<div class="tr" style="top:651.5px"><i></i><u></u><b style="right:1027px">4</b><b style="left:77px">5/02/2013 16:53:08</b><b style="right:787px">23,90</b></div>
<div class="tr" style="top:671.3px"><u></u><b style="right:1027px">5</b><b style="left:77px">5/02/2013 17:03:08</b><b style="right:787px">25,40</b></div>
<div class="tr" style="top:691.0px"><i></i><u></u><b style="right:1027px">6</b><b style="left:77px">5/02/2013 17:13:08</b><b style="right:787px">26,50</b></div>
<div class="tr" style="top:710.8px"><u></u><b style="right:1027px">7</b><b style="left:77px">5/02/2013 17:23:08</b><b style="right:787px">25,70</b></div>
<div class="tr" style="top:730.6px"><i></i><u></u><b style="right:1027px">8</b><b style="left:77px">5/02/2013 17:33:08</b><b style="right:787px">12,70</b></div>
<div class="tr" style="top:750.4px"><u></u><b style="right:1027px">9</b><b style="left:77px">5/02/2013 17:43:08</b><b style="right:787px">6,70</b></div>
<div class="tr" style="top:770.2px"><i></i><u></u><b style="right:1027px">10</b><b style="left:77px">5/02/2013 17:53:08</b><b style="right:787px">4,10</b></div>
<div class="tr" style="top:790.0px"><u></u><b style="right:1027px">11</b><b style="left:77px">5/02/2013 18:03:08</b><b style="right:787px">2,80</b></div>
<div class="tr" style="top:809.8px"><i></i><u></u><b style="right:1027px">12</b><b style="left:77px">5/02/2013 18:13:08</b><b style="right:787px">2,10</b></div>
<div class="tr" style="top:829.6px"><u></u><b style="right:1027px">13</b><b style="left:77px">5/02/2013 18:23:08</b><b style="right:787px">1,60</b></div>
<div class="tr" style="top:849.4px"><i></i><u></u><b style="right:1027px">14</b><b style="left:77px">5/02/2013 18:33:08</b><b style="right:787px">1,30</b></div>
<div class="tr" style="top:869.2px"><u></u><b style="right:1027px">15</b><b style="left:77px">5/02/2013 18:43:08</b><b style="right:787px">1,10</b></div>
<div class="tr" style="top:889.0px"><i></i><u></u><b style="right:1027px">16</b><b style="left:77px">5/02/2013 18:53:08</b><b style="right:787px">0,90</b></div>
<div class="tr" style="top:908.7px"><u></u><b style="right:1027px">17</b><b style="left:77px">5/02/2013 19:03:08</b><b style="right:787px">0,80</b></div>
<div class="tr" style="top:928.5px"><i></i><u></u><b style="right:1027px">18</b><b style="left:77px">5/02/2013 19:13:08</b><b style="right:787px">0,70</b></div>
<div class="tr" style="top:948.3px"><u></u><b style="right:1027px">19</b><b style="left:77px">5/02/2013 19:23:08</b><b style="right:787px">0,60</b></div>
<div class="tr" style="top:968.1px"><i></i><u></u><b style="right:1027px">20</b><b style="left:77px">5/02/2013 19:33:08</b><b style="right:787px">0,60</b></div>
<div class="a" style="left:1620px;top:569px;width:17px;height:417px;background:#f0f0f0"></div>
<div class="a" style="left:1620px;top:585px;width:17px;height:8px;background:#cdcdcd"></div>
<svg class="a" style="left:1620px;top:569px" width="17" height="417" viewBox="0 0 17 417"><path d="M4.5 10.5 L8.5 6.5 L12.5 10.5 M4.5 406.5 L8.5 410.5 L12.5 406.5" stroke="#858585" stroke-width="1.2" fill="none"/></svg>
<style>
.acc{position:absolute;left:1657px;width:243px;height:28.5px;border:1px solid #b2b2b2;border-radius:7px;background:linear-gradient(#f0f0f0,#e6e6e6 50%,#dadada);box-shadow:0 1px 1px rgba(0,0,0,.12);font-size:14px;line-height:27px;color:#111;white-space:nowrap}
.acc span{position:absolute;left:4.5px;top:0;width:201px;overflow:hidden;display:block;height:27px}
.tri{position:absolute}
</style>
<div class="a" style="left:1657px;top:146px;width:243px;height:22px;border-radius:5px 5px 0 0;background:linear-gradient(#d8d8d8 0,#3a3a3a 10%,#1e1e1e 22%,#3c3c3c 45%,#7d7d7d 75%,#a9a9a9 100%)"></div>
<div class="a nw" style="left:1865.5px;top:152px;font-size:9.5px;line-height:14px;font-weight:bold;font-style:italic;color:#f6e3bd">A-</div>
<div class="a nw" style="left:1877.5px;top:148px;font-size:15px;line-height:18px;font-weight:bold;font-style:italic;color:#f6e3bd;letter-spacing:-.3px">A+</div>
<div class="acc" style="top:166px;height:29.5px"><span></span></div><div class="acc" style="top:197px"><span>Réglages du diagramme</span></div><div class="acc" style="top:227px"><span>Exporter une sélection du tableau</span></div><div class="acc" style="top:257px"><span>Rapport</span></div>
<div class="a" style="left:1657px;top:150px;width:243px;height:30px;border:1px dashed #1c1c1c"></div>
<svg class="a" style="left:1872px;top:160px" width="20" height="125" viewBox="0 0 20 125">
 <defs><linearGradient id="trg" gradientUnits="objectBoundingBox" x1="0" y1="0" x2="0" y2="1"><stop offset="0" stop-color="#8e8e8e"/><stop offset="1" stop-color="#505050"/></linearGradient></defs>
 <path fill="url(#trg)" d="M1.5 16.5 H17.5 L9.5 26 Z"/>
 <path fill="url(#trg)" d="M1.5 46.5 H17.5 L9.5 56 Z"/>
 <path fill="url(#trg)" d="M1.5 76.5 H17.5 L9.5 86 Z"/>
 <path fill="url(#trg)" d="M1.5 106.5 H17.5 L9.5 116 Z"/>
</svg>

<div class="a" style="left:1653px;top:253.5px;width:250px;height:35px;border:3.5px solid #e2000f;border-radius:7px"></div>
<div class="a" style="left:1410px;top:86px;width:399px;height:103px;background:#1f4b5e;border-radius:4px;box-shadow:0 1px 3px rgba(0,0,0,.35)"></div>
<div class="a nw" id="tip" style="left:1409px;top:121px;width:399px;text-align:center;font-size:29px;line-height:36px;color:#fff;letter-spacing:.15px">Cliquez sur Rapport</div>
<svg class="a" style="left:1670px;top:285px;filter:drop-shadow(1px 1px 1.5px rgba(0,0,0,.3))" width="200" height="370" viewBox="1670 285 200 370"><path fill="#ff9a06" d="M1771.3 297.2 L1850.2 411.8 A11 11 0 0 1 1838.0 428.6 L1801.0 417.4 V644.0 H1741.6 V417.4 L1704.6 428.6 A11 11 0 0 1 1692.4 411.8 Z"/></svg>

<style>.bb{position:absolute;top:996px;height:27px;border:1px solid #7a7a7a;border-radius:6px;background:linear-gradient(#fcfcfc,#ececec 40%,#d6d6d6 75%,#bdbdbd);box-shadow:inset 0 0 0 1px rgba(255,255,255,.7);font-size:12px;font-weight:bold;line-height:26.5px;text-align:center;color:#111;white-space:nowrap;border-bottom-color:#666}</style>
<div class="bb" style="left:1401px;width:101px">Envoyer e-mail</div>
<svg class="a" style="left:1500px;top:990px" width="280" height="40" viewBox="1500 990 280 40">
 <defs><linearGradient id="b1" x1="0" y1="0" x2="0" y2="1"><stop offset="0" stop-color="#fcfcfc"/><stop offset=".45" stop-color="#ececec"/><stop offset="1" stop-color="#d2d2d2"/></linearGradient>
 <linearGradient id="b2" x1="0" y1="0" x2="0" y2="1"><stop offset="0" stop-color="#f6f6f6"/><stop offset=".4" stop-color="#dcdcdc"/><stop offset="1" stop-color="#a2a2a2"/></linearGradient></defs>
 <path d="M1513.5 996.5 H1655 L1634.5 1020 Q1632.5 1022.5 1629 1022.5 H1513.5 Q1507.5 1022.5 1507.5 1016.5 V1002.5 Q1507.5 996.5 1513.5 996.5 Z" fill="url(#b1)" stroke="#8a8a8a"/>
 <path d="M1671 999 Q1673 996.5 1676.5 996.5 H1763.5 Q1769.5 996.5 1769.5 1002.5 V1016.5 Q1769.5 1022.5 1763.5 1022.5 H1647 Z" fill="url(#b2)" stroke="#6e6e6e"/>
</svg>
<div class="a nw" style="left:1515px;top:1003px;font-size:12px;font-weight:bold;line-height:14px;color:#111" id="bt2">Afficher les alarmes</div>
<div class="a nw" style="left:1673.5px;top:1003px;font-size:12px;font-weight:bold;line-height:14px;color:#111" id="bt3">Ouvrir le fichier</div>
<div class="bb" style="left:1775px;width:131px">Connecter l'appareil</div>

<div class="a" style="left:0;top:1038px;width:1920px;height:40px;background:radial-gradient(ellipse 90px 26px at 1290px 28px,#161d2b 0,rgba(22,29,43,0) 100%),radial-gradient(ellipse 70px 22px at 1200px 16px,#141a27 0,rgba(20,26,39,0) 100%),radial-gradient(ellipse 60px 20px at 1370px 14px,#131926 0,rgba(19,25,38,0) 100%),linear-gradient(90deg,#05070a 0,#07090d 20%,#090c12 35%,#0b0f16 45%,#080b10 55%,#0d121b 60%,#10161f 66%,#0d121a 73%,#090c12 80%,#0b0f16 92%,#0c1118 100%)"></div>
<svg class="a" style="left:0;top:1038px" width="1920" height="40" viewBox="0 1038 1920 40" font-family="Liberation Sans, sans-serif">
<defs>
 <radialGradient id="tk1" cx=".65" cy=".3" r=".8"><stop offset="0" stop-color="#fbd06a"/><stop offset=".35" stop-color="#f59a32"/><stop offset="1" stop-color="#d8591a"/></radialGradient>
 <linearGradient id="atom" x1="0" y1="0" x2="0" y2="1"><stop offset="0" stop-color="#93dba4"/><stop offset=".5" stop-color="#55bd85"/><stop offset="1" stop-color="#1fa36c"/></linearGradient>
 <linearGradient id="ffx" x1=".1" y1=".9" x2=".9" y2=".1"><stop offset="0" stop-color="#d9267a"/><stop offset=".28" stop-color="#f5402f"/><stop offset=".6" stop-color="#ff971f"/><stop offset="1" stop-color="#ffdd3e"/></linearGradient>
 <linearGradient id="pal" x1="0" y1="0" x2="1" y2="1"><stop offset="0" stop-color="#e9f2fa"/><stop offset="1" stop-color="#93c2e6"/></linearGradient>
 <linearGradient id="ntp" x1=".8" y1="0" x2=".2" y2="1"><stop offset="0" stop-color="#d4eef5"/><stop offset=".55" stop-color="#a9d7e4"/><stop offset="1" stop-color="#4f9db3"/></linearGradient>
 <linearGradient id="ffg" x1="0" y1="0" x2="0" y2="1"><stop offset="0" stop-color="#3f86f7"/><stop offset="1" stop-color="#2c3cba"/></linearGradient>
 <linearGradient id="brv" x1="0" y1="0" x2="0" y2="1"><stop offset="0" stop-color="#ff5b2c"/><stop offset="1" stop-color="#e5371a"/></linearGradient>
 <linearGradient id="fld" x1="0" y1="0" x2="0" y2="1"><stop offset="0" stop-color="#fde79b"/><stop offset="1" stop-color="#f8d778"/></linearGradient>
</defs>
<rect x="200" y="1076" width="40" height="2" fill="#7fd9ee"/><rect x="249" y="1076" width="40" height="2" fill="#7fd9ee"/><rect x="281" y="1076" width="8" height="2" fill="#5fb4c9"/><rect x="396" y="1076" width="40" height="2" fill="#7fd9ee"/><rect x="494" y="1076" width="40" height="2" fill="#7fd9ee"/><rect x="526" y="1076" width="8" height="2" fill="#5fb4c9"/><rect x="543" y="1076" width="40" height="2" fill="#7fd9ee"/><rect x="886" y="1076" width="40" height="2" fill="#7fd9ee"/><rect x="935" y="1076" width="40" height="2" fill="#7fd9ee"/><rect x="984" y="1076" width="40" height="2" fill="#7fd9ee"/><rect x="1033" y="1076" width="40" height="2" fill="#7fd9ee"/><rect x="1082" y="1076" width="40" height="2" fill="#7fd9ee"/>
<!-- start -->
<path fill="#fff" d="M15.9 1052.2 L22.5 1051.3 V1057.3 H15.9 Z M23.7 1051.1 L32.1 1049.9 V1057.3 H23.7 Z M15.9 1058.5 H22.5 V1064.5 L15.9 1063.6 Z M23.7 1058.5 H32.1 V1065.8 L23.7 1064.6 Z"/>
<circle cx="71.9" cy="1057.7" r="6.75" fill="none" stroke="#fff" stroke-width="2.1"/>
<rect x="114.65" y="1051.55" width="10.7" height="12.9" fill="none" stroke="#fff" stroke-width="1.3"/>
<path d="M113 1053.6 H110.9 V1062.2 H113 M127 1053.6 H129.1 V1062.2 H127" fill="none" stroke="#fff" stroke-width="1.2"/>
<!-- atom -->
<circle cx="170.8" cy="1057.8" r="12" fill="url(#atom)"/>
<g fill="none" stroke="#e6fbee" stroke-width=".95"><ellipse cx="170.8" cy="1058" rx="8.2" ry="3" transform="rotate(-28 170.8 1058)"/><ellipse cx="170.8" cy="1058" rx="8.2" ry="3" transform="rotate(62 170.8 1058)"/><ellipse cx="170.8" cy="1058" rx="8.2" ry="3" transform="rotate(108 170.8 1058)"/></g>
<path fill="#e6fbee" d="M169.3 1056 Q171 1054.3 172.8 1056 L173.3 1060.2 L171.6 1059.4 L170.6 1060.4 L169.2 1059.6 Z"/>
<!-- outlook -->
<path fill="#0072c6" d="M208.9 1048.9 L222.3 1046.5 V1069.2 L208.9 1066.9 Z"/>
<rect x="222.3" y="1052.3" width="8.6" height="10.8" fill="#fff"/><path d="M222.3 1053.3 L226.4 1058.6 L230.9 1053.3" fill="none" stroke="#0072c6" stroke-width="1.2"/>
<rect x="222.3" y="1051.6" width="8.6" height="1.3" fill="#0072c6"/>
<ellipse cx="215.3" cy="1057.8" rx="2.9" ry="3.65" fill="none" stroke="#fff" stroke-width="1.9"/>
<!-- chrome -->
<circle cx="269.2" cy="1057.7" r="11.1" fill="#dd4a3b"/>
<path fill="#fcc934" d="M269.20 1052.80 L279.16 1052.80 A11.1 11.1 0 0 1 268.46 1068.78 L273.44 1060.15 Z"/>
<path fill="#2da24f" d="M273.44 1060.15 L268.46 1068.78 A11.1 11.1 0 0 1 259.98 1051.52 L264.96 1060.15 Z"/>
<circle cx="269.2" cy="1057.7" r="5.1" fill="#f4f4f4"/><circle cx="269.2" cy="1057.7" r="4.1" fill="#4285f4"/>
<!-- edge / ie -->
<path fill="#0078d7" d="M308.2 1057.8 C308.6 1052 312.8 1047.3 318.8 1047.3 C324.6 1047.3 327.8 1051.6 327.8 1057 L327.8 1060 L314.6 1060 C314.8 1062.8 317 1064.5 320.3 1064.5 C322.7 1064.5 324.8 1063.7 326.6 1062.4 L326.6 1066.3 C324.3 1067.5 321.7 1068.2 318.7 1068.2 C311.8 1068.2 308.2 1064 308.2 1057.8 Z"/>
<path fill="#07090d" d="M314.7 1056.4 C315 1053.6 316.6 1052 318.6 1052 C320.7 1052 322 1053.8 322.1 1056.4 Z M309.7 1057 C310.4 1054.2 312.4 1052.2 315.2 1051 C313.6 1052.5 312.7 1054.4 312.4 1057 Z"/>
<path fill="#f0b90f" d="M377.2 1046.6 C368 1044.4 357.6 1051 356.6 1060.2 C356.2 1064 357.4 1067.2 359.8 1068.4 C358.4 1064 360 1057 365.4 1052 C369 1048.6 373.2 1047 377.2 1046.6 Z"/>
<text x="368.3" y="1068" text-anchor="middle" font-size="35.5" font-weight="bold" fill="#27b9ef">e</text>
<path fill="#f0b90f" d="M360 1068.5 C363 1069.5 368 1068.6 371.5 1066.8 C368 1067.6 363.5 1067.8 361 1066.5 Z"/>
<!-- firefox -->
<circle cx="415.8" cy="1058.2" r="10.8" fill="url(#ffx)"/>
<path fill="#ffe345" d="M417.3 1050.2 C419 1049.2 419.9 1047.6 419.6 1045.9 C423.6 1048 426.4 1052 426.6 1056.8 C425 1053.6 421.6 1051.5 417.3 1050.2 Z"/>
<circle cx="415.3" cy="1056.5" r="5.6" fill="url(#ffg)"/>
<path fill="#ff8a1f" d="M409.4 1056.6 C411.3 1055.3 413.4 1055.6 414 1056.8 C415.5 1058 418 1057.6 418.6 1059 C419 1060.4 417.2 1061.4 415.2 1061 C416.2 1062.2 418.6 1062.4 420.4 1060.6 C419.8 1063.8 417 1065 413.8 1064.4 C410.6 1063.6 409 1060.2 409.4 1056.6 Z"/>
<path fill="#f5502c" d="M407.6 1051.6 C408.6 1051.9 409.6 1052.6 410.2 1053.6 C410.8 1052.4 412 1051.6 413.4 1051.4 C411.6 1052.6 410.4 1054.4 410 1056.6 C408.8 1055.2 407.8 1053.6 407.6 1051.6 Z"/>
<!-- brave -->
<path fill="url(#brv)" d="M459.5 1046.6 H470.5 L472 1048.4 L474.3 1049.4 L473.6 1052 L474 1055 L472.2 1062 Q470 1066.5 465 1069 Q460 1066.5 457.8 1062 L456 1055 L456.4 1052 L455.6 1049.4 L458 1048.4 Z"/>
<path fill="#fff" d="M460.3 1051.8 L462.8 1050.6 L465 1051.4 L467.2 1050.6 L469.7 1051.8 L470.8 1054.5 L469.6 1058.5 L467.8 1061.2 L466.4 1064 L465 1065.2 L463.6 1064 L462.2 1061.2 L460.4 1058.5 L459.2 1054.5 Z"/>
<path fill="#f4502a" d="M461 1054.8 L463.7 1055.5 L462.7 1057 Z M469 1054.8 L466.3 1055.5 L467.3 1057 Z M463.9 1059.6 L466.1 1059.6 L465 1061.2 Z M464.6 1052 H465.4 V1054.6 H464.6 Z M462.4 1058.6 L463.4 1058.3 L463.9 1062 Z M467.6 1058.6 L466.6 1058.3 L466.1 1062 Z"/>
<!-- explorer -->
<path fill="#e9bf55" d="M503.3 1049.6 Q503.3 1048.8 504.1 1048.8 H511.5 L513 1050.4 H524.4 V1053 H503.3 Z"/>
<rect x="503.3" y="1051.2" width="21.1" height="14.6" fill="url(#fld)"/>
<rect x="504.6" y="1049.5" width="3.4" height="1" fill="#9fd4f5"/>
<path fill="#42a5e8" d="M507 1066.8 V1060.4 Q507 1058.8 508.6 1058.8 H519.4 Q521 1058.8 521 1060.4 V1066.8 H517 V1062.4 H511.2 V1066.8 Z"/>
<rect x="552.9" y="1047.8" width="19.8" height="18.2" rx="0" fill="#001e28" stroke="#27c8fb" stroke-width="1.5"/><text x="562.8" y="1061.4" text-anchor="middle" font-size="12.4" fill="#27c8fb" stroke="#27c8fb" stroke-width=".45" letter-spacing="-.1">Ps</text><rect x="601.9" y="1047.8" width="19.8" height="18.2" rx="0" fill="#2a0635" stroke="#d58bf6" stroke-width="1.5"/><text x="611.8" y="1061.4" text-anchor="middle" font-size="12.4" fill="#e09cfb" stroke="#e09cfb" stroke-width=".45" letter-spacing="-.1">Pr</text><rect x="651.8" y="1047.8" width="18.6" height="18.2" rx="3" fill="#2e001f" stroke="#ff2bc2" stroke-width="1.5"/><text x="661.1" y="1061.4" text-anchor="middle" font-size="12.4" fill="#ffe3f8" stroke="#ffe3f8" stroke-width=".45" letter-spacing="-.1">Xd</text><rect x="700.2" y="1047.8" width="19.8" height="18.2" rx="3" fill="#07272d" stroke="#1ee3f5" stroke-width="1.5"/><text x="710.1" y="1061.4" text-anchor="middle" font-size="12.4" fill="#e2fcff" stroke="#e2fcff" stroke-width=".45" letter-spacing="-.1">Lr</text><rect x="748.8" y="1047.8" width="19.8" height="18.2" rx="0" fill="#0e1b29" stroke="#a9cfe6" stroke-width="1.5"/><text x="758.7" y="1061.4" text-anchor="middle" font-size="12.4" fill="#b9d9ec" stroke="#b9d9ec" stroke-width=".45" letter-spacing="-.1">Lr</text>
<!-- notepad -->
<path fill="url(#ntp)" d="M805.3 1047.1 L817.3 1049.9 L814.7 1067.9 L796.3 1062.4 Z"/>
<path fill="#e9f5f9" d="M817.3 1049.9 L814.7 1067.9 L811.2 1066.9 Z" opacity=".9"/>
<path fill="#9fd0df" d="M805.3 1047.1 L817.3 1049.9 L816.9 1052.3 L804.3 1049.3 Z"/>
<path fill="#d9a441" d="M817.3 1049.9 L818.3 1050.6 L815.7 1067.6 L814.7 1067.9 Z"/>
<!-- sourcetree-like -->
<circle cx="857.1" cy="1057.8" r="10.3" fill="#1f4f8f" stroke="#fff" stroke-width="1.5"/>
<path d="M857.1 1067 V1052.5 M857.1 1060.5 L852.6 1056.5 V1053.5 M857.1 1059 L861.6 1055.5 V1053 M857.1 1063 L851.2 1061 L850.6 1058.5 M857.1 1062.5 L863.2 1060 L863.6 1057.6 M854.9 1058.5 V1055 M859.3 1057.3 V1054.5" stroke="#fff" stroke-width="1" fill="none"/><g fill="#fff"><circle cx="857.1" cy="1052" r="1"/><circle cx="852.6" cy="1053" r=".9"/><circle cx="861.6" cy="1052.6" r=".9"/><circle cx="850.5" cy="1058" r=".9"/><circle cx="863.7" cy="1057.2" r=".9"/><circle cx="854.9" cy="1054.6" r=".8"/><circle cx="859.3" cy="1054.1" r=".8"/></g>
<!-- settings gear -->
<g transform="translate(905.6 1057.8)"><circle r="5.6" fill="none" stroke="#fff" stroke-width="3"/><g stroke="#fff" stroke-width="3.4"><path d="M0 -9.4 V-6 M0 9.4 V6 M-9.4 0 H-6 M9.4 0 H6 M-6.65 -6.65 L-4.3 -4.3 M6.65 6.65 L4.3 4.3 M-6.65 6.65 L-4.3 4.3 M6.65 -6.65 L4.3 -4.3"/></g></g>
<!-- remote desktop -->
<path fill="#d5d9e2" d="M945 1047.5 H963 V1061.5 H945 Z"/><rect x="946.3" y="1048.8" width="15.4" height="11.4" fill="#1e47d0"/><path fill="#6f98f2" d="M946.3 1048.8 H954 L950 1060.2 H946.3 Z"/>
<path fill="#b4b8c0" d="M951 1061.5 H957 L958.5 1066 H949.5 Z"/><ellipse cx="954" cy="1067" rx="6.5" ry="1.8" fill="#8d9199"/>
<circle cx="962" cy="1064.5" r="4.6" fill="#e8e8e8"/><path d="M959.8 1062.8 L961.6 1064.5 L959.8 1066.2 M964.2 1062.8 L962.6 1064.5 L964.2 1066.2" stroke="#2a9d3e" stroke-width="1.1" fill="none"/>
<!-- paint -->
<path fill="url(#pal)" d="M992.3 1060.5 C991.6 1054.5 997 1050.2 1004 1050.6 C1010.5 1051 1014.2 1055 1013.2 1059.8 C1012.4 1063.5 1008.5 1065.8 1004.5 1065.8 C1002.5 1065.8 1001.8 1064.6 1001.2 1063.4 C1000.6 1062.4 999.4 1062.2 998.4 1063 C996.8 1064.4 993 1064.6 992.3 1060.5 Z"/>
<ellipse cx="1002.3" cy="1060.3" rx="1.6" ry="1.3" fill="#1a2430"/>
<circle cx="996.3" cy="1059.2" r="1.7" fill="#e0443a"/><circle cx="999.8" cy="1055.4" r="1.7" fill="#56b947"/><circle cx="1004.8" cy="1053.6" r="1.7" fill="#f2b62c"/>
<path d="M1011.5 1049.5 L1003.6 1068.8" stroke="#e9882a" stroke-width="2"/><path fill="#e8c99a" d="M1010.2 1049.8 L1011.2 1046 L1015.6 1048.6 L1012.6 1051.2 Z"/>
<!-- excel -->
<rect x="1052" y="1049.5" width="11.5" height="16.5" fill="#fff" stroke="#1d7044" stroke-width="1"/>
<path d="M1054 1052.8 H1063 M1054 1055.6 H1063 M1054 1058.4 H1063 M1054 1061.2 H1063 M1054 1064 H1063 M1058.8 1050 V1066" stroke="#3a9562" stroke-width=".7"/>
<path fill="#1d7044" d="M1041.5 1049.2 L1055 1046.5 V1069 L1041.5 1066.4 Z"/>
<text x="1048.3" y="1062.2" text-anchor="middle" font-size="12" font-weight="bold" fill="#fff">X</text>
<!-- testo -->
<circle cx="1102.4" cy="1057.8" r="11.6" fill="url(#tk1)"/>
<text x="1102.4" y="1060.6" text-anchor="middle" font-size="8.6" font-weight="bold" fill="#fff" letter-spacing="-.2">testo</text>
<!-- tray -->
<path d="M1554.9 1060.9 L1560.9 1054.9 L1566.9 1060.9" stroke="#fff" stroke-width="1.25" fill="none"/>
<g fill="none" stroke-linecap="round"><path d="M1588.6 1052.9 A6 6 0 1 0 1589.6 1061.6" stroke="#f2f2f2" stroke-width="1.5"/><path d="M1589.6 1061.6 A6 6 0 0 0 1588.6 1052.9" stroke="#555" stroke-width="1.3"/><path d="M1587.2 1055.6 A3.2 3.2 0 1 0 1587.9 1059.6" stroke="#f2f2f2" stroke-width="1.3"/><path d="M1587.9 1059.6 A3.2 3.2 0 0 0 1587.2 1055.6" stroke="#666" stroke-width="1.1"/></g><circle cx="1585.1" cy="1057.7" r="1" fill="#ddd"/>
<g fill="#ff7800"><rect x="1600.6" y="1054.6" width="16.4" height="6.4" rx="3.2" transform="rotate(-42 1608.8 1057.8)"/><rect x="1601.4" y="1054.8" width="14.8" height="6" rx="3" transform="rotate(40 1608.8 1057.8)"/><circle cx="1608.8" cy="1057.8" r="5"/></g>
<text x="1608.9" y="1060.6" text-anchor="middle" font-size="9" font-weight="bold" fill="#fff">a</text>
<g fill="#eaf7fe" stroke="#7fd3f7" stroke-width=".8"><circle cx="1630.6" cy="1055" r="4.6"/><circle cx="1635.6" cy="1060" r="4.6"/><circle cx="1633.1" cy="1057.5" r="5.6" stroke="none"/></g>
<text x="1633.1" y="1061.6" text-anchor="middle" font-size="11" font-weight="bold" fill="#00aff0">S</text>
<circle cx="1637.3" cy="1062.2" r="3.1" fill="#6cb52d" stroke="#f4f4f4" stroke-width=".9"/><path d="M1635.9 1062.3 L1637 1063.3 L1638.8 1061.2" stroke="#fff" stroke-width=".8" fill="none"/>
<g fill="none" stroke="#f2f2f2" stroke-width="1.5"><rect x="1651.4" y="1054.6" width="7.6" height="6" rx="3"/><rect x="1655.4" y="1054.9" width="7.6" height="6" rx="3"/></g>
<path fill="#3a9bee" d="M1674.2 1061.9 A2.9 2.9 0 0 1 1675.6 1056.6 A3.4 3.4 0 0 1 1681.6 1055.4 L1679 1061.9 Z"/>
<path fill="#1a7fd8" d="M1678.4 1061.9 H1686.6 A2.9 2.9 0 0 0 1687 1056.2 A4.2 4.2 0 0 0 1679.2 1055.2 A3.4 3.4 0 0 0 1678.4 1061.9 Z"/>
<g fill="#fff"><path d="M1701.8 1052.3 L1705.2 1054.6 L1701.8 1056.9 L1698.4 1054.6 Z M1708.6 1052.3 L1712 1054.6 L1708.6 1056.9 L1705.2 1054.6 Z M1701.8 1056.9 L1705.2 1059.2 L1701.8 1061.5 L1698.4 1059.2 Z M1708.6 1056.9 L1712 1059.2 L1708.6 1061.5 L1705.2 1059.2 Z M1705.2 1060.3 L1708.2 1062.4 L1705.2 1064.5 L1702.2 1062.4 Z"/></g>
<g fill="none" stroke="#fff" stroke-width="1.2"><rect x="1724.2" y="1052.9" width="12.4" height="9"/><path d="M1730.4 1061.9 V1064.6 M1726.6 1064.9 H1734.2"/><rect x="1721.3" y="1052.1" width="4.6" height="5.4" fill="#0b0f14"/><path d="M1722.6 1053.6 H1724.6" stroke-width=".9"/></g>
<path fill="none" stroke="#fff" stroke-width="1.2" d="M1745.5 1055.8 H1748 L1751.5 1052.5 V1063.5 L1748 1060.2 H1745.5 Z"/><path d="M1754 1055.5 A3.6 3.6 0 0 1 1754 1060.5" stroke="#fff" stroke-width="1.1" fill="none"/><path d="M1756.3 1053.3 A6.5 6.5 0 0 1 1756.3 1062.7" stroke="#9a9a9a" stroke-width="1.1" fill="none"/><path d="M1758.6 1051.3 A9.4 9.4 0 0 1 1758.6 1064.7" stroke="#666" stroke-width="1.1" fill="none"/>
<path d="M1777 1064.5 C1775 1061 1781 1061 1780 1057 L1785 1050.5 L1787.5 1052 L1783 1059.5 C1781 1062 1786 1063 1783.5 1065.5 M1786 1054 L1789.5 1056" stroke="#fff" stroke-width="1.3" fill="none"/>
<text x="1831.6" y="1053" text-anchor="middle" font-size="12" fill="#fff" letter-spacing="-.55">16:48</text>
<text x="1832.2" y="1070.5" text-anchor="middle" font-size="12" fill="#fff" letter-spacing="-.2">25/07/2018</text>
<path d="M1878.6 1050.3 H1895.4 V1062.3 H1886.5 L1883.2 1065.6 V1062.3 H1878.6 Z" fill="#fff"/><path d="M1881.2 1053.4 H1892.8 M1881.2 1056.2 H1892.8 M1881.2 1059 H1889" stroke="#10141b" stroke-width="1.1"/>
<circle cx="1894.5" cy="1065.3" r="7.6" fill="#2b2e33" stroke="#7d7d7d" stroke-width="1.4"/>
<text x="1894.5" y="1069.6" text-anchor="middle" font-size="12" font-weight="bold" fill="#fff">4</text>
<rect x="1915" y="1038" width="1" height="40" fill="#4a4d52"/>
</svg>

</body></html>
